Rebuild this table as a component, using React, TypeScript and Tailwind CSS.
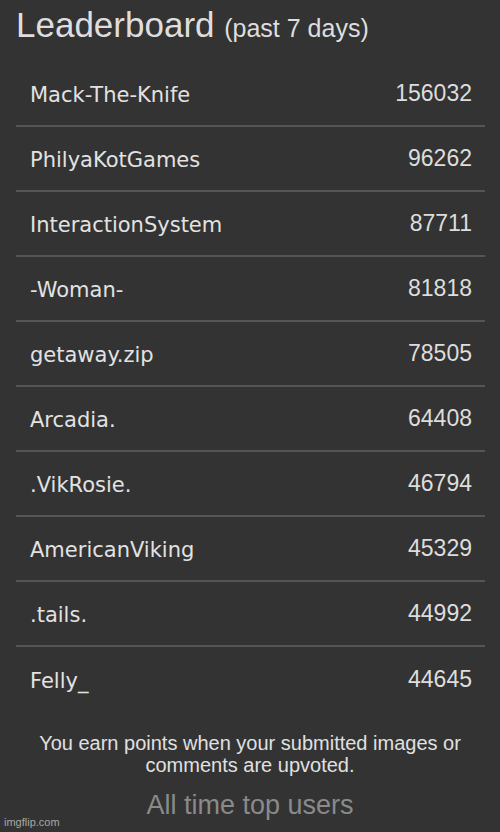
import React from "react";

const USERS: [string, number][] = [
  ["Mack-The-Knife", 156032],
  ["PhilyaKotGames", 96262],
  ["InteractionSystem", 87711],
  ["-Woman-", 81818],
  ["getaway.zip", 78505],
  ["Arcadia.", 64408],
  [".VikRosie.", 46794],
  ["AmericanViking", 45329],
  [".tails.", 44992],
  ["Felly_", 44645],
];

export default function App() {
  return (
    <div className="relative h-[832px] w-[500px] overflow-hidden bg-[#333333] font-['Liberation_Sans',Arial,sans-serif] text-[#dddddd]">
      <div className="flex h-[62px] items-start pl-[16px] pt-[5px]">
        <h1 className="text-[35px] leading-[40px] text-[#dedede]">
          Leaderboard <span className="text-[25px]">(past 7 days)</span>
        </h1>
      </div>

      <div className="ml-[16px] w-[469px]">
        {USERS.map(([name, pts], i) => (
          <div
            key={name}
            className={`flex h-[65px] items-center justify-between pl-[14px] pr-[13px] ${
              i < USERS.length - 1 ? "border-b-2 border-[#555555]" : ""
            }`}
          >
            <span className="mt-[5px] font-['DejaVu_Sans',Verdana,sans-serif] text-[21px] text-[#e2e2e2]">
              {name}
            </span>
            <span className="text-[23px] text-[#dddddd]">{pts}</span>
          </div>
        ))}
      </div>

      <p className="mt-[20px] px-[20px] text-center text-[20px] leading-[22px] text-[#e0e0e0]">
        You earn points when your submitted images or
        <br />
        comments are upvoted.
      </p>
      <div className="mt-[13px] text-center text-[27px] leading-[32px] text-[#8a8a8a]">
        All time top users
      </div>

      <span className="absolute bottom-[2px] left-[4px] text-[11px] text-[#a8a8a8]">
        imgflip.com
      </span>
    </div>
  );
}
